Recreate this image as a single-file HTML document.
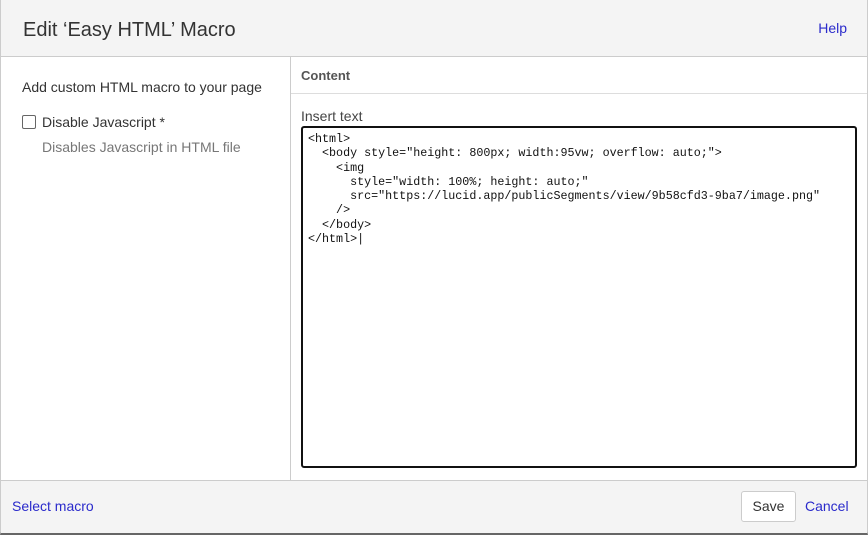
<!DOCTYPE html>
<html><head><style>
body{margin:0;width:868px;height:535px;overflow:hidden;background:#fff;font-family:"Liberation Sans",sans-serif;position:relative}
.frame{position:absolute;left:0;top:0;width:866px;height:532px;border-left:1px solid #ccc;border-right:1px solid #ccc;border-bottom:3px solid #666;box-sizing:content-box}
.hdr{position:absolute;left:1px;top:0;width:866px;height:56px;background:#f4f4f4;border-bottom:1px solid #ccc}
.title{position:absolute;left:22px;top:19px;font-size:20px;color:#333}
.help{position:absolute;right:20px;top:20px;font-size:14px;color:#2a2acb}
.left{position:absolute;left:1px;top:57px;width:289px;height:423px;border-right:1px solid #ccc}
.ch{position:absolute;left:291px;top:57px;width:576px;height:36px;border-bottom:1px solid #ddd}
.ch span{position:absolute;left:10px;top:11px;font-size:13px;font-weight:bold;color:#555}
.t{position:absolute;font-size:14px;color:#333}
.ta{position:absolute;left:301px;top:126px;border:2px solid #111;border-radius:3px;font-family:"Liberation Mono",monospace;font-size:11.7px;line-height:14.3px;color:#111;white-space:pre;padding:4px 0 0 5px;box-sizing:border-box;width:556px;height:342px}
.ftr{position:absolute;left:1px;top:480px;width:866px;height:52px;background:#f4f4f4;border-top:1px solid #ccc}
.sel{position:absolute;left:11px;top:17px;font-size:14px;color:#2a2acb}
.save{position:absolute;left:740px;top:10px;width:53px;height:29px;border:1px solid #ccc;border-radius:3px;background:#fff;font-size:14px;color:#333;text-align:center;line-height:29px}
.cancel{position:absolute;left:804px;top:17px;font-size:14px;color:#2a2acb}
.cb{position:absolute;left:22px;top:115px;width:12px;height:12px;border:1px solid #666;border-radius:2px;background:#fff}
</style></head><body>
<div class="frame"></div>
<div class="hdr"><div class="title">Edit ‘Easy HTML’ Macro</div><div class="help">Help</div></div>
<div class="left"></div>
<div class="t" style="left:22px;top:79px">Add custom HTML macro to your page</div>
<div class="cb"></div>
<div class="t" style="left:42px;top:114px">Disable Javascript *</div>
<div class="t" style="left:42px;top:139px;color:#777">Disables Javascript in HTML file</div>
<div class="ch"><span>Content</span></div>
<div class="t" style="left:301px;top:108px;color:#444">Insert text</div>
<div class="ta">&lt;html&gt;
  &lt;body style="height: 800px; width:95vw; overflow: auto;"&gt;
    &lt;img
      style="width: 100%; height: auto;"
      src="https://lucid.app/publicSegments/view/9b58cfd3-9ba7/image.png"
    /&gt;
  &lt;/body&gt;
&lt;/html&gt;|</div>
<div class="ftr"><div class="sel">Select macro</div><div class="save">Save</div><div class="cancel">Cancel</div></div>
</body></html>
